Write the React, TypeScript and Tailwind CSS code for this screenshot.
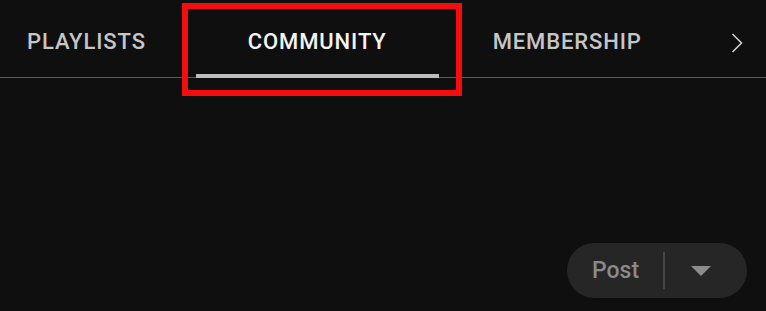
import { ReactNode } from "react";

const font = { fontFamily: "Roboto, 'Noto Sans', sans-serif" };

function Tab({
  children,
  active,
  className = "",
}: {
  children: ReactNode;
  active?: boolean;
  className?: string;
}) {
  return (
    <div className="-mb-px flex flex-col">
      <span
        className={`pt-[31px] text-[22px] font-medium leading-[22px] tracking-[0.04em] ${className} ${
          active ? "text-[#f4f4f4]" : "text-[#c6c6c6]"
        }`}
      >
        {children}
      </span>
      {active && <div className="mt-auto h-[4px] bg-[#bdbdbd]" />}
    </div>
  );
}

export default function App() {
  return (
    <div className="relative flex h-[311px] w-[766px] flex-col overflow-hidden bg-[#0f0f0f]" style={font}>
      <div className="flex h-[78px] items-stretch border-b border-[#5a5a5a]">
        <Tab className="pl-[27px] pr-[50px]">PLAYLISTS</Tab>
        <Tab active className="px-[52px]">
          COMMUNITY
        </Tab>
        <Tab className="px-[54px]">MEMBERSHIP</Tab>
        <div className="ml-auto flex items-start pr-[23px] pt-[33px]">
          <svg width="12" height="20" viewBox="0 0 12 20" fill="none">
            <polyline points="1.5,1 10.5,10 1.5,19" stroke="#cfcfcf" strokeWidth="1.6" />
          </svg>
        </div>
      </div>

      {/* annotation box */}
      <div className="pointer-events-none absolute left-[182px] top-[3px] h-[93px] w-[280px] border-[6px] border-[#f30d0d]" />

      <main className="flex flex-1 items-end justify-end pb-[13px] pr-[19px]">
        <div className="flex h-[55px] w-[180px] items-center rounded-full bg-[#262626]">
          <span className="pl-[25px] pr-[24px] text-[23px] font-medium leading-none text-[#8a8a8a]">
            Post
          </span>
          <div className="h-[37px] w-[2px] bg-[#464646]" />
          <div className="flex flex-1 justify-center pr-[10px]">
            <svg width="20" height="10" viewBox="0 0 20 10">
              <polygon points="0,0 20,0 10,10" fill="#8c8c8c" />
            </svg>
          </div>
        </div>
      </main>
    </div>
  );
}
